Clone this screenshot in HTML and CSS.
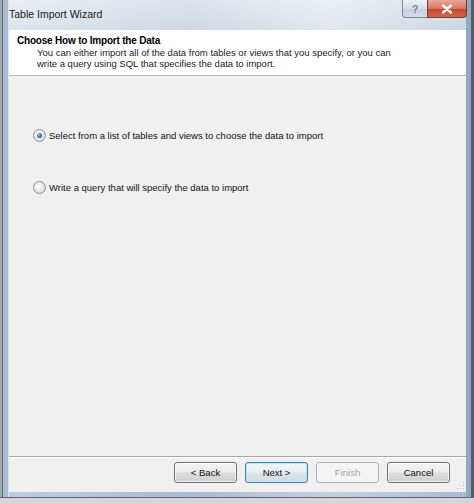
FILE: index.html
```html
<!DOCTYPE html>
<html>
<head>
<meta charset="utf-8">
<link rel="stylesheet" href="styles.css">
</head>
<body>
<div class="window">
  <div class="titlebar">
    <div class="title">Table Import Wizard</div>
    <div class="caption-buttons">
      <div class="cap-btn help">?</div>
      <div class="cap-btn close">
        <svg width="12" height="10" viewBox="0 0 12 10"><path d="M2 1.5 L10 8.5 M10 1.5 L2 8.5" stroke="#fff" stroke-width="2.4" stroke-linecap="round"/></svg>
      </div>
    </div>
  </div>
  <div class="client">
    <div class="header">
      <div class="header-title">Choose How to Import the Data</div>
      <div class="header-desc">You can either import all of the data from tables or views that you specify, or you can<br>write a query using SQL that specifies the data to import.</div>
    </div>
    <div class="content">
      <label class="option first"><span class="radio checked"></span><span class="opt-text">Select from a list of tables and views to choose the data to import</span></label>
      <label class="option second"><span class="radio"></span><span class="opt-text">Write a query that will specify the data to import</span></label>
    </div>
    <div class="footer">
      <div class="btn">&lt; Back</div>
      <div class="btn default">Next &gt;</div>
      <div class="btn disabled">Finish</div>
      <div class="btn">Cancel</div>
      <svg class="gripper" width="8" height="8" viewBox="0 0 8 8">
        <rect x="6" y="0" width="1" height="1" fill="#b5b5b5"/>
        <rect x="3" y="3" width="1" height="1" fill="#b5b5b5"/>
        <rect x="6" y="3" width="1" height="1" fill="#b5b5b5"/>
        <rect x="0" y="6" width="1" height="1" fill="#b5b5b5"/>
        <rect x="3" y="6" width="1" height="1" fill="#b5b5b5"/>
        <rect x="6" y="6" width="1" height="1" fill="#b5b5b5"/>
      </svg>
    </div>
  </div>
</div>
</body>
</html>
```
FILE: styles.css
```css
html, body {
  margin: 0;
  padding: 0;
  background: #d4d4d4;
}
body {
  font-family: "Liberation Sans", Arial, sans-serif;
  color: #111;
}
.window {
  width: 474px;
  height: 503px;
  display: flex;
  flex-direction: column;
  box-sizing: border-box;
  background:
    linear-gradient(to top, #d6d6d6 0 5px, #5d6773 5px 6px, transparent 6px),
    linear-gradient(to right, #a3a8ad 0 2px, #5f6975 2px 3px, #a7bbd2 3px 8px, #dde6f0 8px 9px, transparent 9px calc(100% - 8px), #90a8c4 calc(100% - 8px) calc(100% - 3px), #525c67 calc(100% - 3px)),
    linear-gradient(to right, rgba(255,255,255,0.25), rgba(180,190,200,0.15) 40%, rgba(255,255,255,0.3) 70%, rgba(170,185,200,0.2)),
    linear-gradient(#e4eaf1, #d2dce7 30px, #a9bcd3 60px, #a9bcd3);
}
.titlebar {
  height: 30px;
  display: flex;
  align-items: flex-start;
  flex-shrink: 0;
}
.title {
  padding: 8px 0 0 9px;
  font-size: 10.5px;
  color: #1a1a1a;
}
.caption-buttons {
  margin-left: auto;
  margin-right: 7px;
  display: flex;
}
.cap-btn {
  height: 18px;
  box-sizing: border-box;
  display: flex;
  align-items: center;
  justify-content: center;
}
.help {
  width: 25px;
  border: 1px solid #7c8a9a;
  border-top: none;
  border-right: none;
  border-radius: 0 0 0 4px;
  background: linear-gradient(#eef2f6, #d6dee7 50%, #c3cfdc 51%, #d3dde8);
  color: #7d8894;
  font-size: 11px;
  font-weight: bold;
}
.close {
  width: 40px;
  border: 1px solid #6d3c38;
  border-top: none;
  border-radius: 0 0 4px 0;
  background: linear-gradient(#e9a898, #d87762 50%, #c2432d 51%, #d5664f);
}
.client {
  flex: 1;
  display: flex;
  flex-direction: column;
  margin: 0 8px 11px 9px;
  background: #f0f0f0;
}
.header {
  height: 46px;
  box-sizing: border-box;
  background: #fff;
  border-bottom: 1px solid #b4b4b4;
  padding: 5px 0 0 8px;
}
.header-title {
  font-weight: bold;
  font-size: 10px;
  line-height: 12px;
  letter-spacing: -0.2px;
  color: #000;
}
.header-desc {
  margin-left: 20px;
  font-size: 9.5px;
  line-height: 11px;
  color: #1a1a1a;
}
.content {
  flex: 1;
  display: flex;
  flex-direction: column;
  padding: 52px 0 0 24px;
  border-bottom: 1px solid #a8a8a8;
}
.option {
  display: flex;
  align-items: center;
  gap: 3px;
  font-size: 9.5px;
  height: 14px;
}
.option.second {
  margin-top: 38px;
}
.radio {
  width: 11px;
  height: 11px;
  border-radius: 50%;
  border: 1px solid #8c8f94;
  background: radial-gradient(circle at 40% 40%, #ffffff, #dcdcdc 70%, #c8c8c8);
  position: relative;
  flex-shrink: 0;
}
.radio.checked::after {
  content: "";
  position: absolute;
  left: 3px;
  top: 3px;
  width: 5px;
  height: 5px;
  border-radius: 50%;
  background: radial-gradient(circle at 40% 35%, #8fd3f5, #2c6a9e 60%, #123d66);
}
.footer {
  height: 35px;
  box-sizing: border-box;
  border-top: 1px solid #fff;
  display: flex;
  align-items: flex-start;
  padding: 4px 0 0 165px;
  gap: 8px;
  position: relative;
}
.btn {
  width: 63px;
  height: 21px;
  box-sizing: border-box;
  border: 1px solid #707070;
  border-radius: 3px;
  background: linear-gradient(#f3f3f3, #ebebeb 48%, #dddddd 52%, #cfcfcf);
  box-shadow: inset 0 0 0 1px rgba(255,255,255,0.7);
  font-size: 9.5px;
  display: flex;
  align-items: center;
  justify-content: center;
  color: #111;
}
.btn.default {
  border-color: #3c7fb1;
  box-shadow: inset 0 0 0 1px #bfe6f8;
  background: linear-gradient(#f3f5f7, #eaf0f4 48%, #dbe4ea 52%, #cfdbe3);
}
.btn.disabled {
  border-color: #adb2b5;
  background: #f4f4f4;
  box-shadow: none;
  color: #a3a3a3;
}
.gripper {
  position: absolute;
  right: 1px;
  bottom: 2px;
}
```
